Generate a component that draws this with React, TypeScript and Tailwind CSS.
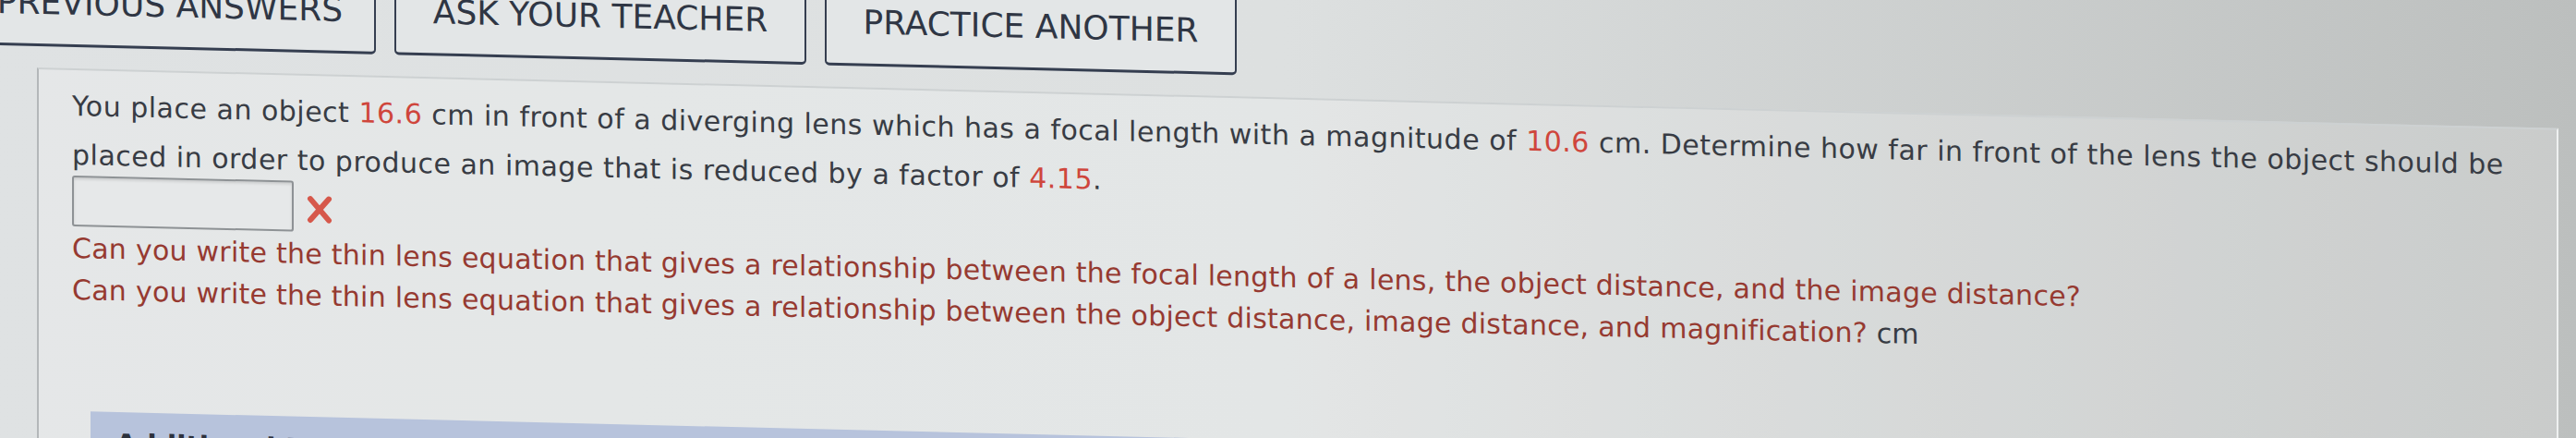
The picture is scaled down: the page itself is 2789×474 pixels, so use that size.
import React from 'react';

const buttons = ['PREVIOUS ANSWERS', 'ASK YOUR TEACHER', 'PRACTICE ANOTHER'];

function Num({ children }: { children: React.ReactNode }) {
  return <span className="text-[#cf463c]">{children}</span>;
}

export default function App() {
  return (
    <div className="relative h-[474px] w-[2789px] overflow-hidden bg-gradient-to-r from-[#dfe2e3] via-[#dde0e0] to-[#bcbfbe] font-['DejaVu_Sans',sans-serif]">
      <div className="origin-top-left skew-y-[1.38deg]">
        {/* top action buttons, cut off by the top of the photo */}
        <div className="ml-[-39px] flex h-[72px] gap-[20px]">
          {buttons.map((b) => (
            <div
              key={b}
              className="mt-[-41px] flex h-[90px] w-[446px] items-end justify-center rounded-b-[5px] border-2 border-b-[3px] border-[#353e50] bg-[#e3e6e7] pb-[30px] text-[36px] leading-[28px] text-[#2f3644]"
            >
              {b}
            </div>
          ))}
        </div>

        {/* question panel */}
        <div className="ml-[40px] mr-[19px] h-[440px] border-l-2 border-r-2 border-t-2 border-l-[#b3b7b9] border-r-[#eef0f0] border-t-[#cdd1d2] bg-white/20 pl-[36px] pr-[24px] pt-[12px]">
          <p className="text-[30px] leading-[53px] tracking-[0.5px] text-[#383c44]">
            You place an object <Num>16.6</Num> cm in front of a diverging lens which has a focal length with a magnitude of{' '}
            <Num>10.6</Num> cm. Determine how far in front of the lens the object should be placed in order to produce an
            image that is reduced by a factor of <Num>4.15</Num>.
          </p>

          <div className="mt-[-4px] flex items-center gap-[13px]">
            <div className="h-[55px] w-[240px] rounded-[3px] border-2 border-[#8e9295] bg-[#e6e8e9] shadow-[inset_0_2px_3px_rgba(0,0,0,0.12)]" />
            <svg width="30" height="31" viewBox="0 0 30 31" className="mt-[6px]">
              <path d="M5 4 L25 27 M25 4 L5 27" stroke="#d6584b" strokeWidth="6" strokeLinecap="round" />
            </svg>
          </div>

          <div className="mt-[1px] text-[30px] leading-[45px] tracking-[0.25px] text-[#963a31]">
            <p>
              Can you write the thin lens equation that gives a relationship between the focal length of a lens, the object
              distance, and the image distance?
            </p>
            <p>
              Can you write the thin lens equation that gives a relationship between the object distance, image distance, and
              magnification? <span className="text-[#383c44]">cm</span>
            </p>
          </div>

          <div className="ml-[20px] mt-[109px] h-[80px] w-[2560px] bg-[#b7c3dc] pl-[27px] pt-[18px] text-[30px] font-bold leading-[34px] text-[#2c313c]">
            Additional Materials
          </div>
        </div>
      </div>
    </div>
  );
}
